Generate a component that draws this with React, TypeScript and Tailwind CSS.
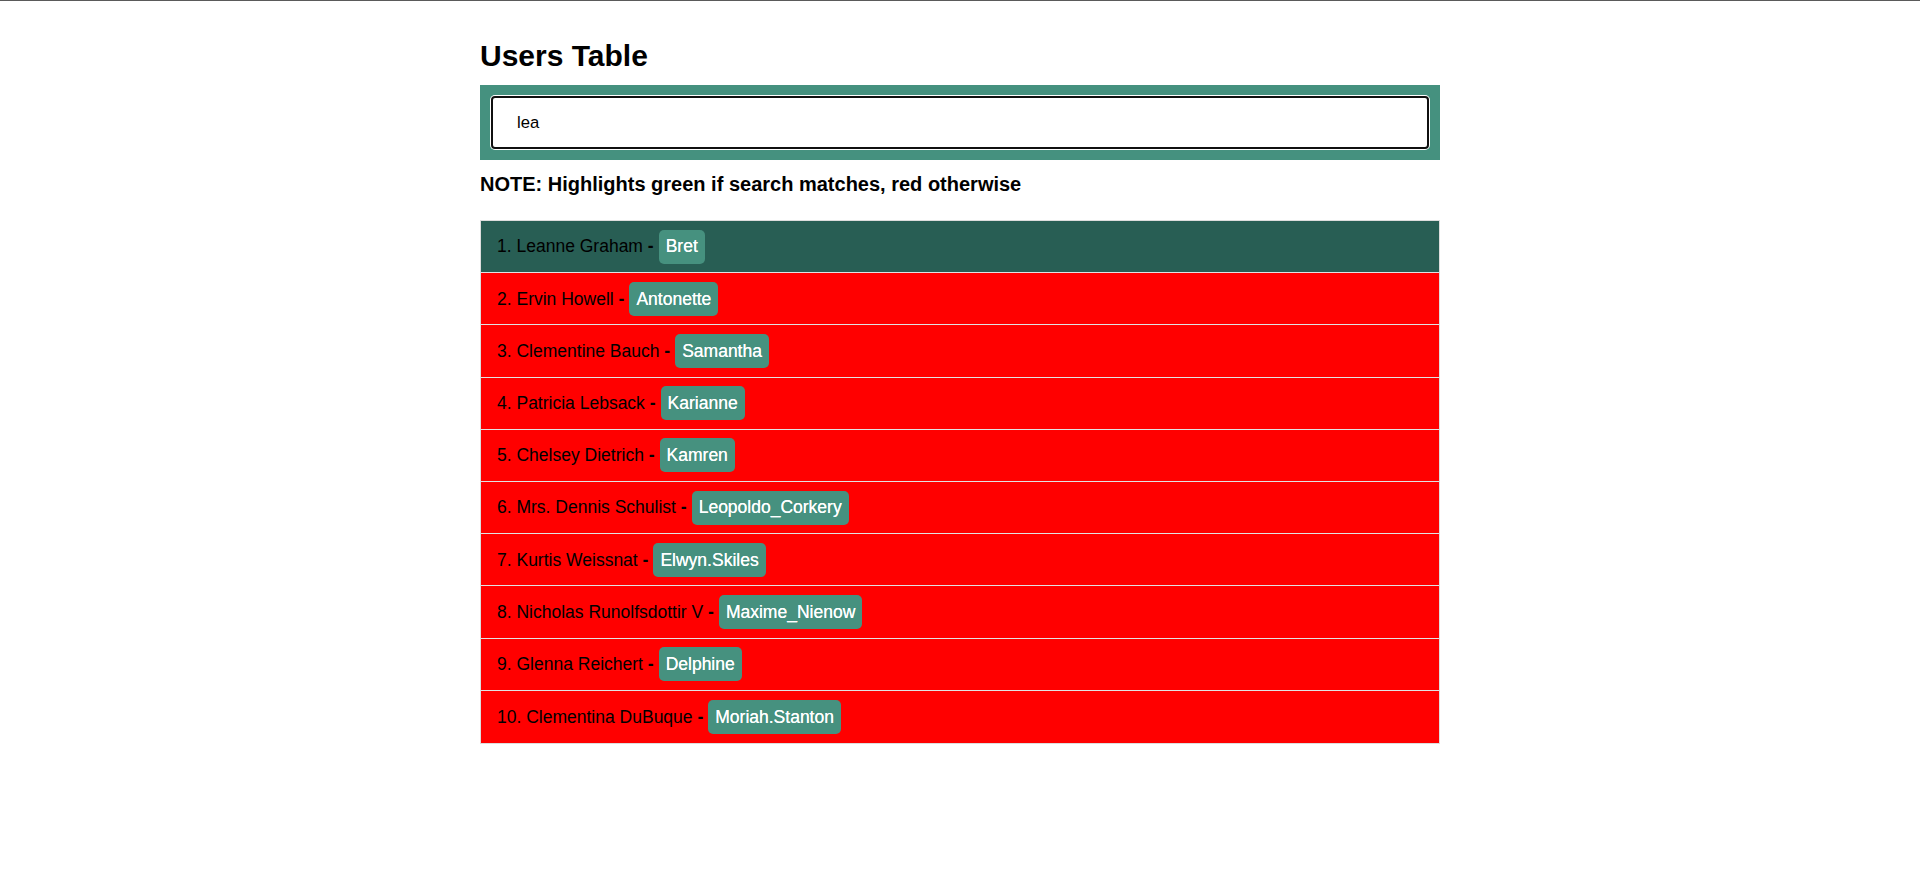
import { useState } from 'react';

type User = {
  id: number;
  name: string;
  username: string;
};

const users: User[] = [
  { id: 1, name: 'Leanne Graham', username: 'Bret' },
  { id: 2, name: 'Ervin Howell', username: 'Antonette' },
  { id: 3, name: 'Clementine Bauch', username: 'Samantha' },
  { id: 4, name: 'Patricia Lebsack', username: 'Karianne' },
  { id: 5, name: 'Chelsey Dietrich', username: 'Kamren' },
  { id: 6, name: 'Mrs. Dennis Schulist', username: 'Leopoldo_Corkery' },
  { id: 7, name: 'Kurtis Weissnat', username: 'Elwyn.Skiles' },
  { id: 8, name: 'Nicholas Runolfsdottir V', username: 'Maxime_Nienow' },
  { id: 9, name: 'Glenna Reichert', username: 'Delphine' },
  { id: 10, name: 'Clementina DuBuque', username: 'Moriah.Stanton' },
];

const App: React.FC = () => {
  const [search, setSearch] = useState('lea');
  const term = search.trim().toLowerCase();

  return (
    <div className="min-h-screen bg-white text-black font-['Liberation_Sans',Arial,sans-serif]">
      <div className="h-px bg-[#5a5a5a]" />
      <div className="w-[960px] mx-auto">
        <h2 className="mt-[38px] text-[30px] leading-[34px] font-bold">Users Table</h2>

        <div className="mt-[12px] bg-[#45917f] p-[11px]">
          <input
            autoFocus
            value={search}
            onChange={(e) => setSearch(e.target.value)}
            className="block w-full h-[53px] bg-white rounded-[4px] border-[2.5px] border-[#101010] shadow-[0_0_0_1px_#ffffff] outline-none pl-[24px] text-[16.67px] text-black caret-black"
          />
        </div>

        <p className="mt-[13px] text-[20px] leading-[23px] font-bold">
          NOTE: Highlights green if search matches, red otherwise
        </p>

        <ul className="mt-[24px] border border-[#dddddd]">
          {users.map((user) => {
            const matches = term !== '' && user.name.toLowerCase().includes(term);
            return (
              <li
                key={user.id}
                className={`flex items-center h-[52.2px] pl-[16px] text-[17.5px] border-b border-[#e2e2e2] last:border-b-0 ${
                  matches ? 'bg-[#285e54]' : 'bg-[#ff0000]'
                }`}
              >
                <span>
                  {user.id}. {user.name} <span className="font-bold">-</span>{' '}
                </span>
                <span className="ml-[5px] inline-flex items-center h-[34px] px-[7px] rounded-[5px] bg-[#46917f] text-white [text-shadow:0_0_0.4px_#ffffff]">
                  {user.username}
                </span>
              </li>
            );
          })}
        </ul>
      </div>
    </div>
  );
};

export default App;
